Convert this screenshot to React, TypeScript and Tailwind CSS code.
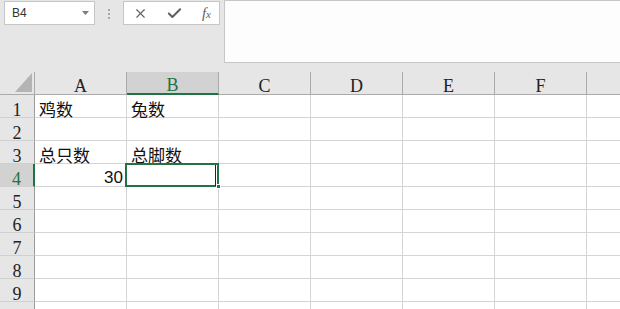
import { X, Check } from "lucide-react";

const columns = ["A", "B", "C", "D", "E", "F", "G"];
const rows = [1, 2, 3, 4, 5, 6, 7, 8, 9, 10];

const cells: Record<string, string> = {
  A1: "鸡数",
  B1: "兔数",
  A3: "总只数",
  B3: "总脚数",
};

const serif = "font-['Liberation_Serif','Noto_Sans_CJK_SC',serif]";
const cjk = "font-['Noto_Sans_CJK_SC',sans-serif]";

function FormulaBar() {
  return (
    <div className="flex h-[72px] items-start">
      <div className="mt-px ml-1 flex h-[24px] w-[91px] items-center justify-between border border-[#c6c6c6] bg-white pr-[5px] pl-[7px]">
        <span className="text-[12px] text-[#333]">B4</span>
        <svg width="7" height="4" viewBox="0 0 7 4">
          <path d="M0 0h7L3.5 4z" fill="#7b7b7b" />
        </svg>
      </div>
      <div className="mt-[9px] ml-[13px] flex flex-col gap-[2px]">
        <span className="size-[2px] bg-[#a8a8a8]" />
        <span className="size-[2px] bg-[#a8a8a8]" />
        <span className="size-[2px] bg-[#a8a8a8]" />
      </div>
      <div className="mt-px ml-[13px] flex h-[24px] w-[97px] items-center justify-between border border-[#c6c6c6] bg-white pr-[8px] pl-[9px] text-[#5f5f5f]">
        <X size={15} strokeWidth={1.7} />
        <Check size={17} strokeWidth={2.8} />
        <span className="font-['Liberation_Serif',serif] text-[15px] leading-none italic">
          f<span className="text-[11px]">x</span>
        </span>
      </div>
      <div className="ml-[4px] h-[63px] flex-1 border-y border-l border-[#c6c6c6] bg-[#fdfdfd]" />
    </div>
  );
}

function Sheet() {
  return (
    <div className="grid grid-cols-[35px_repeat(7,92px)] grid-rows-[23px_repeat(10,23px)]">
      <div className="flex items-end justify-end border-r border-b border-r-[#ababab] border-b-[#ababab] pr-[2px] pb-[2px]">
        <svg width="17" height="19" viewBox="0 0 17 19">
          <path d="M17 0V19H0z" fill="#b4b4b4" />
        </svg>
      </div>
      {columns.map((c) => (
        <div
          key={c}
          className={`flex items-center justify-center border-r pt-[6px] text-[18px] ${serif} ${
            c === "B"
              ? "border-b-2 border-r-[#ababab] border-b-[#217346] bg-[#d2d2d2] text-[#217346]"
              : "border-b border-r-[#ababab] border-b-[#ababab] text-[#222]"
          }`}
        >
          {c}
        </div>
      ))}
      {rows.map((r) => (
        <Row key={r} r={r} />
      ))}
    </div>
  );
}

function Row({ r }: { r: number }) {
  const active = r === 4;
  return (
    <>
      <div
        className={`flex items-center justify-center border-b border-b-[#d0d0d0] pt-[8px] text-[18px] ${serif} ${
          active
            ? "border-r-2 border-r-[#217346] bg-[#d2d2d2] text-[#217346]"
            : "border-r border-r-[#9b9b9b] text-[#222]"
        }`}
      >
        {r}
      </div>
      {columns.map((c) => {
        const id = `${c}${r}`;
        return (
          <div
            key={id}
            className="relative flex items-center border-r border-b border-[#d4d4d4] bg-white text-[#111]"
          >
            {cells[id] && (
              <span className={`pt-[5px] pl-[4px] text-[17px] ${cjk}`}>{cells[id]}</span>
            )}
            {id === "A4" && (
              <span className="ml-auto pt-[6px] pr-[3px] font-['Liberation_Sans',sans-serif] text-[17px]">
                30
              </span>
            )}
            {id === "B4" && (
              <div className="absolute -top-[1px] -left-[2px] z-10 h-[24px] w-[94px] border-2 border-[#217346]">
                <span className="absolute top-0 right-[1px] h-[21px] w-px bg-[#222]" />
                <span className="absolute -right-[4px] -bottom-[4px] size-[5px] border border-white bg-[#217346]" />
              </div>
            )}
          </div>
        );
      })}
    </>
  );
}

export default function App() {
  return (
    <div className="h-[309px] w-[620px] overflow-hidden bg-[#e6e6e6] font-['Liberation_Sans',sans-serif]">
      <FormulaBar />
      <Sheet />
    </div>
  );
}
